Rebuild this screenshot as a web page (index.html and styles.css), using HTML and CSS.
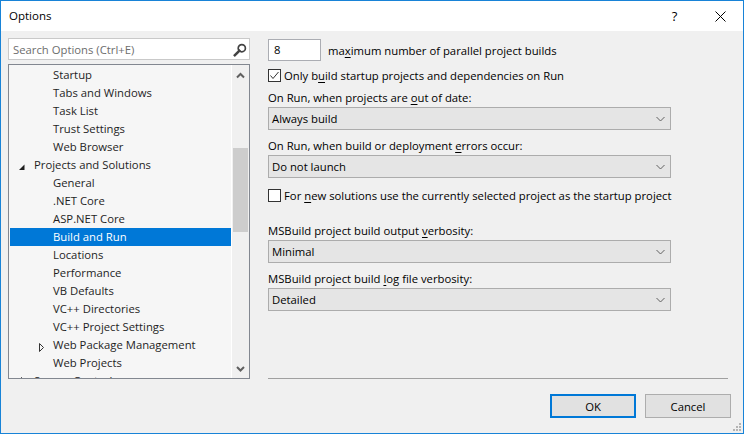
FILE: index.html
```html
<!DOCTYPE html>
<html>
<head>
<meta charset="utf-8">
<title>Options</title>
<link rel="stylesheet" href="styles.css">
</head>
<body>
<div class="window">
  <div class="titlebar">
    <span class="title">Options</span>
    <div class="caption">
      <span class="cbtn help">?</span>
      <span class="cbtn close">
        <svg width="11" height="11" viewBox="0 0 11 11"><path d="M0.5 0.5 L10.5 10.5 M10.5 0.5 L0.5 10.5" stroke="#000" stroke-width="1" fill="none"/></svg>
      </span>
    </div>
  </div>
  <div class="content">
    <div class="main">
      <div class="left">
        <div class="search">
          <span class="placeholder">Search Options (Ctrl+E)</span>
          <svg class="mag" width="14" height="14" viewBox="0 0 14 14"><circle cx="8.8" cy="5.2" r="3.6" stroke="#424242" stroke-width="1.7" fill="none"/><path d="M6.3 7.8 L1.8 12.3" stroke="#424242" stroke-width="2.4" stroke-linecap="square"/></svg>
        </div>
        <div class="tree">
          <div class="list">
            <div class="row lvl2"><span class="exp"></span>Startup</div>
            <div class="row lvl2"><span class="exp"></span>Tabs and Windows</div>
            <div class="row lvl2"><span class="exp"></span>Task List</div>
            <div class="row lvl2"><span class="exp"></span>Trust Settings</div>
            <div class="row lvl2"><span class="exp"></span>Web Browser</div>
            <div class="row lvl1"><span class="exp"><svg width="16" height="18" viewBox="0 0 16 18"><polygon points="6.5,8.5 6.5,14 1,14" fill="#1e1e1e"/></svg></span>Projects and Solutions</div>
            <div class="row lvl2"><span class="exp"></span>General</div>
            <div class="row lvl2"><span class="exp"></span>.NET Core</div>
            <div class="row lvl2"><span class="exp"></span>ASP.NET Core</div>
            <div class="row lvl2 sel"><span class="exp"></span>Build and Run</div>
            <div class="row lvl2"><span class="exp"></span>Locations</div>
            <div class="row lvl2"><span class="exp"></span>Performance</div>
            <div class="row lvl2"><span class="exp"></span>VB Defaults</div>
            <div class="row lvl2"><span class="exp"></span>VC++ Directories</div>
            <div class="row lvl2"><span class="exp"></span>VC++ Project Settings</div>
            <div class="row lvl2"><span class="exp"><svg width="16" height="18" viewBox="0 0 16 18"><polygon points="2.5,7.5 6.5,11.5 2.5,15.5" fill="none" stroke="#333" stroke-width="1"/></svg></span>Web Package Management</div>
            <div class="row lvl2"><span class="exp"></span>Web Projects</div>
            <div class="row lvl1"><span class="exp"><svg width="16" height="18" viewBox="0 0 16 18"><polygon points="3.5,5.5 7.5,9.5 3.5,13.5" fill="none" stroke="#333" stroke-width="1"/></svg></span>Source Control</div>
          </div>
          <div class="scrollbar">
            <div class="sb-btn"><svg width="17" height="17" viewBox="0 0 17 17"><polyline points="5,12.5 8.5,9 12,12.5" fill="none" stroke="#606060" stroke-width="2"/></svg></div>
            <div class="track"><div class="thumb"></div></div>
            <div class="sb-btn"><svg width="17" height="17" viewBox="0 0 17 17"><polyline points="5,6 8.5,9.5 12,6" fill="none" stroke="#606060" stroke-width="2"/></svg></div>
          </div>
        </div>
      </div>
      <div class="right">
        <div class="numrow">
          <span class="num">8</span>
          <span class="numlabel">ma<u>x</u>imum number of parallel project builds</span>
        </div>
        <div class="check gap7">
          <span class="box"><svg width="11" height="11" viewBox="0 0 11 11"><polyline points="1.5,5.5 4,8.5 9.5,2" fill="none" stroke="#333" stroke-width="1"/></svg></span>
          <span>Only b<u>u</u>ild startup projects and dependencies on Run</span>
        </div>
        <div class="label gap7">On Run, when projects are <u>o</u>ut of date:</div>
        <div class="combo"><span>Always build</span><svg width="9" height="6" viewBox="0 0 9 6"><polyline points="0.5,1 4.5,5 8.5,1" fill="none" stroke="#606060" stroke-width="1"/></svg></div>
        <div class="label gap8">On Run, when build or deployment <u>e</u>rrors occur:</div>
        <div class="combo"><span>Do not launch</span><svg width="9" height="6" viewBox="0 0 9 6"><polyline points="0.5,1 4.5,5 8.5,1" fill="none" stroke="#606060" stroke-width="1"/></svg></div>
        <div class="check gap10">
          <span class="box"></span>
          <span>For <u>n</u>ew solutions use the currently selected project as the startup project</span>
        </div>
        <div class="label gap20">MSBuild project build output <u>v</u>erbosity:</div>
        <div class="combo"><span>Minimal</span><svg width="9" height="6" viewBox="0 0 9 6"><polyline points="0.5,1 4.5,5 8.5,1" fill="none" stroke="#606060" stroke-width="1"/></svg></div>
        <div class="label gap8">MSBuild project build <u>l</u>og file verbosity:</div>
        <div class="combo"><span>Detailed</span><svg width="9" height="6" viewBox="0 0 9 6"><polyline points="0.5,1 4.5,5 8.5,1" fill="none" stroke="#606060" stroke-width="1"/></svg></div>
        <div class="sep"></div>
      </div>
    </div>
    <div class="footer">
      <span class="btn default">OK</span>
      <span class="btn">Cancel</span>
    </div>
  </div>
  <svg class="grip" width="9" height="9" viewBox="0 0 9 9">
    <rect x="7" y="1" width="2" height="2" fill="#b4b4b4"/>
    <rect x="4" y="4" width="2" height="2" fill="#b4b4b4"/>
    <rect x="7" y="4" width="2" height="2" fill="#b4b4b4"/>
    <rect x="1" y="7" width="2" height="2" fill="#b4b4b4"/>
    <rect x="4" y="7" width="2" height="2" fill="#b4b4b4"/>
    <rect x="7" y="7" width="2" height="2" fill="#b4b4b4"/>
  </svg>
</div>
</body>
</html>
```
FILE: styles.css
```css
* { box-sizing: border-box; }
html, body { margin: 0; padding: 0; }
body {
  width: 744px;
  height: 434px;
  font-family: "Open Sans", "Noto Sans", sans-serif;
  font-size: 11.3px;
  color: #000;
  background: #f0f0f0;
}
u { text-underline-offset: 2px; text-decoration-thickness: 1px; }
.window {
  width: 744px;
  height: 434px;
  border: 1px solid #1883d7;
  background: #f0f0f0;
  display: flex;
  flex-direction: column;
  position: relative;
  overflow: hidden;
}
.titlebar {
  flex: none;
  height: 30px;
  background: #fff;
  display: flex;
  align-items: center;
  justify-content: space-between;
}
.title { padding-left: 8px; line-height: 16px; font-size: 11.5px; }
.caption { display: flex; height: 30px; }
.cbtn {
  width: 46px;
  height: 30px;
  display: flex;
  align-items: center;
  justify-content: center;
}
.help { font-size: 13px; padding-left: 1px; }
.content {
  flex: 1;
  display: flex;
  flex-direction: column;
  padding: 7px 0 0 7px;
}
.main { display: flex; height: 341px; flex: none; }
.left { width: 242px; display: flex; flex-direction: column; }
.search {
  height: 22px;
  border: 1px solid #c9c9c9;
  background: #fff;
  display: flex;
  align-items: center;
  justify-content: space-between;
  padding: 0 2px 0 4px;
  color: #6d6d6d;
}
.mag { margin-top: 1px; }
.tree {
  margin-top: 4px;
  height: 315px;
  border: 1px solid #828790;
  background: #f6f6f6;
  display: flex;
}
.list { flex: 1; padding: 1px 0 0 1px; overflow: hidden; }
.row {
  height: 18px;
  line-height: 18px;
  display: flex;
  align-items: center;
  white-space: nowrap;
  color: #1e1e1e;
}
.lvl1 { padding-left: 8px; }
.lvl2 { padding-left: 27px; }
.exp { width: 16px; height: 18px; flex: none; display: block; }
.exp svg { display: block; }
.sel { background: #0078d7; color: #fff; }
.scrollbar {
  width: 18px;
  flex: none;
  border-left: 1px solid #fff;
  background: #f0f0f0;
  display: flex;
  flex-direction: column;
}
.sb-btn { height: 17px; flex: none; }
.sb-btn svg { display: block; }
.track { flex: 1; }
.thumb { margin: 66px 1px 0; height: 84px; background: #cdcdcd; }
.right {
  width: 460px;
  margin-left: 18px;
  padding-top: 1px;
  display: flex;
  flex-direction: column;
}
.numrow { display: flex; align-items: center; height: 22px; flex: none; }
.num {
  width: 53px;
  height: 22px;
  border: 1px solid #abadb3;
  background: #fff;
  padding-left: 5px;
  line-height: 20px;
}
.numlabel { margin-left: 7px; }
.check { display: flex; align-items: center; height: 15px; flex: none; white-space: nowrap; }
.box {
  width: 13px;
  height: 13px;
  border: 1px solid #333;
  background: #fff;
  margin-right: 3px;
  flex: none;
}
.box svg { display: block; }
.label { height: 16px; line-height: 16px; flex: none; white-space: nowrap; }
.gap7 { margin-top: 7px; }
.gap8 { margin-top: 8px; }
.gap10 { margin-top: 10px; }
.gap20 { margin-top: 20px; }
.combo {
  width: 403px;
  height: 23px;
  flex: none;
  margin-top: 1px;
  background: #e5e5e5;
  border: 1px solid #acacac;
  display: flex;
  align-items: center;
  justify-content: space-between;
  padding: 0 5px 0 3px;
}
.combo svg { display: block; }
.sep { margin-top: auto; height: 1px; background: #a0a0a0; flex: none; }
.footer {
  display: flex;
  justify-content: flex-end;
  gap: 9px;
  padding: 15px 12px 0 0;
}
.btn {
  width: 86px;
  height: 24px;
  background: #e1e1e1;
  border: 1px solid #adadad;
  display: flex;
  align-items: center;
  justify-content: center;
}
.btn.default { border: 2px solid #0078d7; }
.grip { position: absolute; right: 2px; bottom: 2px; }
```
